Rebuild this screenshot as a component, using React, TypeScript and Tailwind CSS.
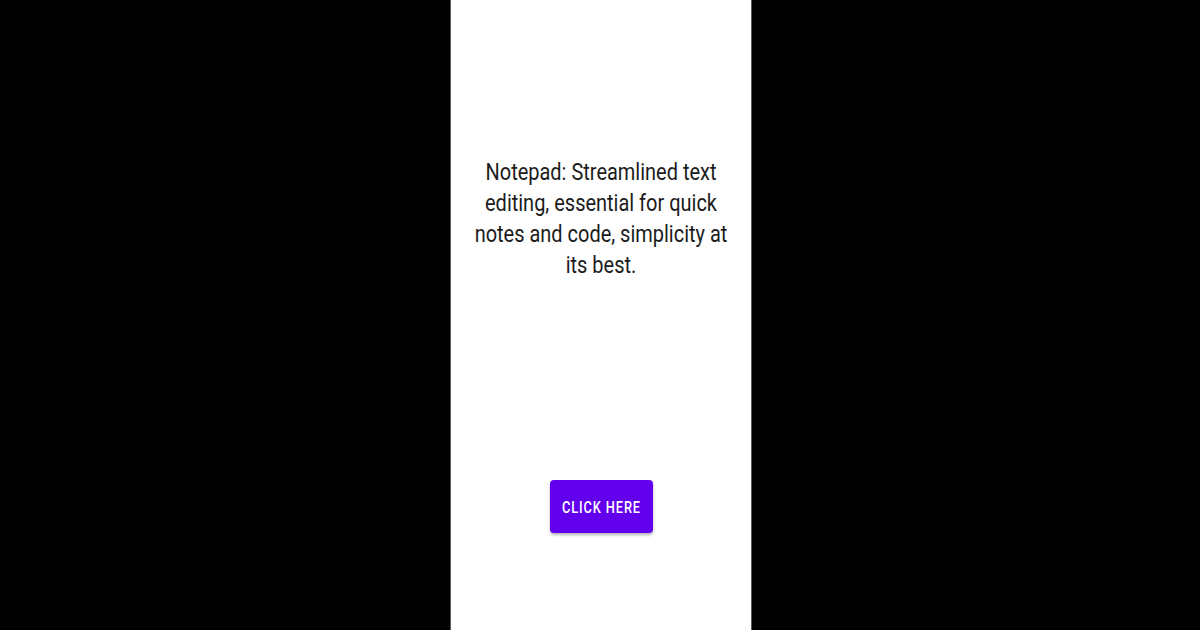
export default function App() {
  return (
    <div className="w-full h-[630px] bg-black flex justify-center overflow-hidden pl-[2px]">
      <div className="w-[302px] h-full bg-white border-x border-[#5a5a5a] flex flex-col items-center">
        {/* description */}
        <div className="mt-[157px] w-[318px] shrink-0 scale-x-[0.832] text-center text-[24px] leading-[31px] text-[#1c1c1c] font-['Roboto',sans-serif]">
          Notepad: Streamlined text editing, essential for quick notes and code, simplicity at its best.
        </div>

        <button className="mt-[199px] w-[103px] h-[53px] bg-[#6200ee] rounded-[4px] shadow-[0_2px_3px_rgba(0,0,0,0.3)] flex items-center justify-center pt-[3px]">
          <span className="scale-x-[0.8] text-white text-[16px] font-medium tracking-[0.07em] font-['Roboto',sans-serif] whitespace-nowrap">
            CLICK HERE
          </span>
        </button>
      </div>
    </div>
  );
}
